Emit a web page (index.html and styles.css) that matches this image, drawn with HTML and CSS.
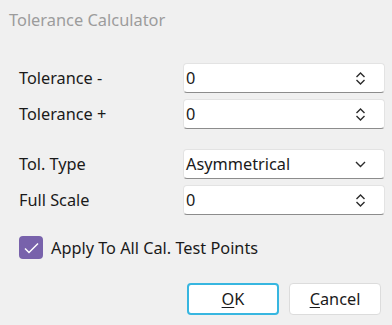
FILE: index.html
```html
<!DOCTYPE html>
<html>
<head>
<meta charset="utf-8">
<link rel="stylesheet" href="styles.css">
</head>
<body>
<div class="dialog">
  <div class="title">Tolerance Calculator</div>
  <div class="grid group1">
    <label class="lbl">Tolerance -</label>
    <div class="field"><span class="val">0</span>
      <svg class="spin" width="11" height="15" viewBox="0 0 11 15"><path d="M1.5 6 L5.5 2 L9.5 6 M1.5 9 L5.5 13 L9.5 9" fill="none" stroke="#2b2b2b" stroke-width="1.4"/></svg>
    </div>
    <label class="lbl">Tolerance +</label>
    <div class="field"><span class="val">0</span>
      <svg class="spin" width="11" height="15" viewBox="0 0 11 15"><path d="M1.5 6 L5.5 2 L9.5 6 M1.5 9 L5.5 13 L9.5 9" fill="none" stroke="#2b2b2b" stroke-width="1.4"/></svg>
    </div>
  </div>
  <div class="grid group2">
    <label class="lbl">Tol. Type</label>
    <div class="field"><span class="val">Asymmetrical</span>
      <svg class="chev" width="11" height="7" viewBox="0 0 11 7"><path d="M1 1 L5.5 5.5 L10 1" fill="none" stroke="#2b2b2b" stroke-width="1.4"/></svg>
    </div>
    <label class="lbl">Full Scale</label>
    <div class="field"><span class="val">0</span>
      <svg class="spin" width="11" height="15" viewBox="0 0 11 15"><path d="M1.5 6 L5.5 2 L9.5 6 M1.5 9 L5.5 13 L9.5 9" fill="none" stroke="#2b2b2b" stroke-width="1.4"/></svg>
    </div>
  </div>
  <div class="check-row">
    <span class="checkbox">
      <svg width="15" height="12" viewBox="0 0 15 12"><path d="M1 6.5 L5 10.5 L14 1.5" fill="none" stroke="#fff" stroke-width="1.5"/></svg>
    </span>
    <span class="check-label">Apply To All Cal. Test Points</span>
  </div>
  <div class="buttons">
    <button class="btn btn-ok"><u>O</u>K</button>
    <button class="btn"><u>C</u>ancel</button>
  </div>
</div>
</body>
</html>
```

FILE: styles.css
```css
html, body {
  margin: 0;
  padding: 0;
  background: #f0f0f0;
}
body {
  width: 392px;
  height: 325px;
  overflow: hidden;
  font-family: "Noto Sans", "Open Sans", sans-serif;
  font-size: 16.3px;
  color: #1a1a1a;
}
.dialog {
  display: flex;
  flex-direction: column;
}
.title {
  padding: 9px 0 0 9px;
  height: 22px;
  line-height: 22px;
  font-size: 16.4px;
  color: #9c9c9c;
}
.grid {
  display: grid;
  grid-template-columns: 164px 202px;
  row-gap: 6px;
  padding-left: 19px;
  align-items: center;
}
.group1 {
  margin-top: 32px;
}
.group2 {
  margin-top: 20px;
}
.lbl {
  line-height: 20px;
}
.field {
  box-sizing: border-box;
  height: 30px;
  background: #fff;
  border: 1px solid #e3e3e3;
  border-bottom-color: #8c8c8c;
  border-radius: 4px;
  display: flex;
  align-items: center;
  justify-content: space-between;
  padding: 0 18px 0 2px;
}
.val {
  line-height: 20px;
}
.spin, .chev {
  display: block;
}
.check-row {
  display: flex;
  align-items: center;
  gap: 8px;
  padding-left: 19px;
  margin-top: 21px;
  height: 23px;
}
.checkbox {
  box-sizing: border-box;
  width: 24px;
  height: 23px;
  border-radius: 4px;
  background: #7862ab;
  display: flex;
  align-items: center;
  justify-content: center;
}
.checkbox svg {
  display: block;
}
.check-label {
  line-height: 20px;
}
.buttons {
  display: flex;
  justify-content: flex-end;
  gap: 10px;
  padding-right: 11px;
  margin-top: 24px;
}
.btn {
  box-sizing: border-box;
  width: 92px;
  height: 32px;
  background: #fff;
  border: 1px solid #dcdcdc;
  border-radius: 4px;
  font-family: inherit;
  font-size: 16.3px;
  color: #1a1a1a;
  padding: 0;
}
.btn-ok {
  border: 2px solid #37b6e0;
}
.btn u {
  text-underline-offset: 2px;
}
```
